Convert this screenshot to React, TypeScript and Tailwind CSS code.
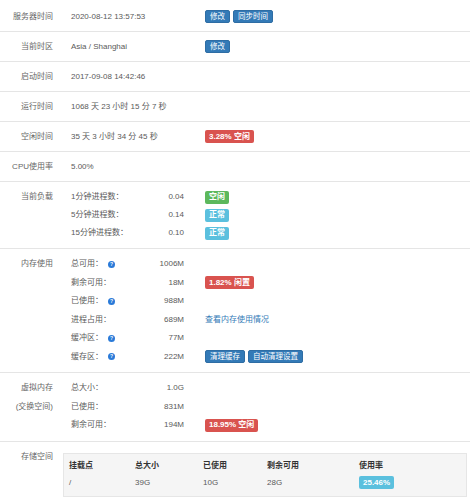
import React from "react";

const FONT = "font-['Liberation_Sans','Noto_Sans_CJK_SC',sans-serif]";

function Btn({ children }: { children: React.ReactNode }) {
  return (
    <span className="inline-flex items-center h-[13px] px-[4px] rounded-[2px] bg-[#337ab7] text-white text-[7.5px] leading-none border border-[#2e6da4]">
      {children}
    </span>
  );
}

function Badge({ color, children }: { color: string; children: React.ReactNode }) {
  return (
    <span
      className={
        "inline-flex items-center h-[13px] px-[4px] rounded-[2px] text-white text-[8px] font-bold leading-none " +
        color
      }
    >
      {children}
    </span>
  );
}

function Q() {
  return (
    <span className="ml-[5px] inline-flex items-center justify-center w-[7px] h-[7px] rounded-full bg-[#2a7ad8] text-white text-[5px] font-bold leading-none">
      ?
    </span>
  );
}

function Row({ label, children, extra }: { label: React.ReactNode; children?: React.ReactNode; extra?: React.ReactNode }) {
  return (
    <div className="flex items-center h-[30px] border-b border-[#e5e5e5]">
      <div className="w-[53px] text-right text-[#666] shrink-0">{label}</div>
      <div className="ml-[18px] w-[134px] shrink-0">{children}</div>
      <div className="flex items-center gap-[3px]">{extra}</div>
    </div>
  );
}

function Sub({
  name,
  q,
  value,
  extra,
  h,
}: {
  name: string;
  q?: boolean;
  value: string;
  extra?: React.ReactNode;
  h: string;
}) {
  return (
    <div className={"flex items-center " + h}>
      <div className="w-[113px] flex items-center shrink-0">
        <span className="flex items-center">
          {name}
          {q && <Q />}
        </span>
        <span className="ml-auto">{value}</span>
      </div>
      <div className="ml-[21px] flex items-center gap-[3px]">{extra}</div>
    </div>
  );
}

export default function App() {
  return (
    <div className={"w-[470px] pt-[2px] bg-white text-[8px] text-[#5a5a5a] " + FONT}>
      <Row
        label="服务器时间"
        extra={
          <>
            <Btn>修改</Btn>
            <Btn>同步时间</Btn>
          </>
        }
      >
        2020-08-12 13:57:53
      </Row>
      <Row label="当前时区" extra={<Btn>修改</Btn>}>
        Asia / Shanghai
      </Row>
      <Row label="启动时间">2017-09-08 14:42:46</Row>
      <Row label="运行时间">1068 天 23 小时 15 分 7 秒</Row>
      <Row label="空闲时间" extra={<Badge color="bg-[#d9534f]">3.28% 空闲</Badge>}>
        35 天 3 小时 34 分 45 秒
      </Row>
      <Row label="CPU使用率">5.00%</Row>

      <div className="flex py-[6px] border-b border-[#e5e5e5]">
        <div className="w-[53px] text-right text-[#666] shrink-0 h-[18px] flex items-center justify-end">当前负载</div>
        <div className="ml-[18px] flex flex-col">
          <Sub h="h-[18px]" name="1分钟进程数：" value="0.04" extra={<Badge color="bg-[#5cb85c]">空闲</Badge>} />
          <Sub h="h-[18px]" name="5分钟进程数：" value="0.14" extra={<Badge color="bg-[#5bc0de]">正常</Badge>} />
          <Sub h="h-[18px]" name="15分钟进程数：" value="0.10" extra={<Badge color="bg-[#5bc0de]">正常</Badge>} />
        </div>
      </div>

      <div className="flex py-[6px] border-b border-[#e5e5e5]">
        <div className="w-[53px] text-right text-[#666] shrink-0 h-[18.5px] flex items-center justify-end">内存使用</div>
        <div className="ml-[18px] flex flex-col">
          <Sub h="h-[18.5px]" name="总可用：" q value="1006M" />
          <Sub h="h-[18.5px]" name="剩余可用：" value="18M" extra={<Badge color="bg-[#d9534f]">1.82% 闲置</Badge>} />
          <Sub h="h-[18.5px]" name="已使用：" q value="988M" />
          <Sub
            h="h-[18.5px]"
            name="进程占用："
            value="689M"
            extra={<span className="text-[#337ab7]">查看内存使用情况</span>}
          />
          <Sub h="h-[18.5px]" name="缓冲区：" q value="77M" />
          <Sub
            h="h-[18.5px]"
            name="缓存区："
            q
            value="222M"
            extra={
              <>
                <Btn>清理缓存</Btn>
                <Btn>自动清理设置</Btn>
              </>
            }
          />
        </div>
      </div>

      <div className="flex py-[6px] border-b border-[#e5e5e5]">
        <div className="w-[53px] text-right text-[#666] shrink-0 flex flex-col">
          <div className="h-[18.5px] flex items-center justify-end">虚拟内存</div>
          <div className="h-[18.5px] flex items-center justify-end">(交换空间)</div>
        </div>
        <div className="ml-[18px] flex flex-col">
          <Sub h="h-[18.5px]" name="总大小：" value="1.0G" />
          <Sub h="h-[18.5px]" name="已使用：" value="831M" />
          <Sub h="h-[18.5px]" name="剩余可用：" value="194M" extra={<Badge color="bg-[#d9534f]">18.95% 空闲</Badge>} />
        </div>
      </div>

      <div className="flex pt-[10px]">
        <div className="w-[53px] text-right text-[#666] shrink-0 h-[8px] leading-[8px] mt-[1px]">存储空间</div>
        <div className="ml-[10px] mt-[1px] w-[404px] bg-[#f5f5f5] border border-[#e6e6e6] pt-[4px] pb-[5px] px-[5px]">
          <div className="flex items-center h-[17px] font-bold text-[#333]">
            <div className="w-[66px]">挂载点</div>
            <div className="w-[68px]">总大小</div>
            <div className="w-[64px]">已使用</div>
            <div className="w-[92px]">剩余可用</div>
            <div>使用率</div>
          </div>
          <div className="flex items-center h-[16px]">
            <div className="w-[66px]">/</div>
            <div className="w-[68px]">39G</div>
            <div className="w-[64px]">10G</div>
            <div className="w-[92px]">28G</div>
            <div>
              <Badge color="bg-[#5bc0de]">25.46%</Badge>
            </div>
          </div>
        </div>
      </div>
    </div>
  );
}
